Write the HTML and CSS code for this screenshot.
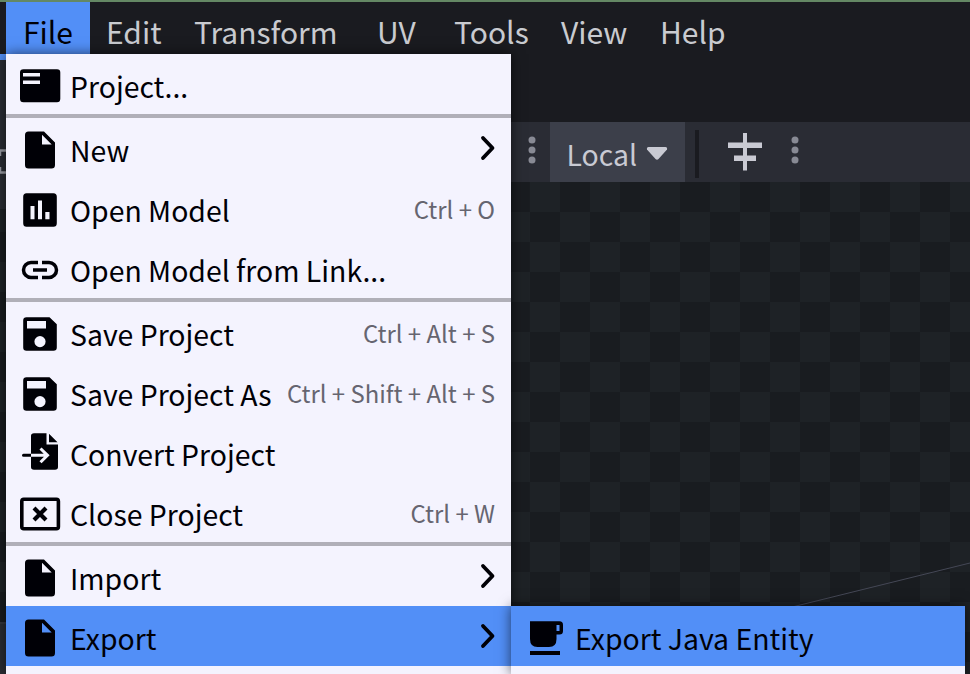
FILE: index.html
```
<!DOCTYPE html>
<html lang="en">
<head>
<meta charset="utf-8">
<title>Model editor</title>
<link rel="stylesheet" href="styles.css">
</head>
<body>
<svg class="defs" aria-hidden="true">
  <symbol id="doc" viewBox="0 0 40 40"><path fill-rule="evenodd" d="M8.500 1.500H24L35 12.500V35Q35 38.500 31.500 38.500H8.500Q5 38.500 5 35V5Q5 1.500 8.500 1.500ZM22 4.800V14.500H31.700Z"/></symbol>
  <symbol id="save" viewBox="0 0 40 40"><path fill-rule="evenodd" d="M6.500 3.300H29.500L36.800 10.300V33.500Q36.800 36.800 33.500 36.800H6.500Q3.200 36.800 3.200 33.500V6.500Q3.200 3.300 6.500 3.300ZM7 7V14.500H26V7ZM20 22A5.600 5.600 0 1 0 20 33.200A5.600 5.600 0 1 0 20 22Z"/></symbol>
  <symbol id="chev" viewBox="0 0 16 26"><path d="M3 3L12.500 13L3 23" fill="none" stroke="currentColor" stroke-width="3.800" stroke-linecap="round" stroke-linejoin="round"/></symbol>
</svg>
<div class="app">
  <nav class="menubar">
    <span class="tab file active">File</span><span class="tab edit">Edit</span><span class="tab transform">Transform</span><span class="tab uv">UV</span><span class="tab tools">Tools</span><span class="tab view">View</span><span class="tab help">Help</span>
  </nav>
  <div class="workspace">
    <aside class="side"><div class="accent"></div><div class="tools-left"><svg viewBox="0 0 7 28"><path d="M7 2.500H0V8M7 24.500H0V19" fill="none" stroke="#9a9ca4" stroke-width="2.500"/></svg></div><div class="texture"></div><div class="panel"></div></aside>
    <main class="main">
      <div class="head"></div>
      <div class="toolbar">
        <svg class="dots" viewBox="0 0 8 30"><circle cx="4" cy="5" r="3.500"/><circle cx="4" cy="15" r="3.500"/><circle cx="4" cy="25" r="3.500"/></svg>
        <div class="select"><span class="select-label">Local</span><svg viewBox="0 0 22 14"><path d="M2.500 0H19.500Q21.500 0 21 2.500L12.500 12Q11 13.500 9.500 12L1 2.500Q.5 0 2.500 0Z"/></svg></div>
        <div class="divider"></div>
        <svg class="pivot" viewBox="0 0 34 38"><path d="M15 0H19V9.500H34V15H19V22.500H28V28H19V37.500H15V28H6V22.500H15V15H0V9.500H15Z"/></svg>
        <svg class="dots" viewBox="0 0 8 30"><circle cx="4" cy="5" r="3.500"/><circle cx="4" cy="15" r="3.500"/><circle cx="4" cy="25" r="3.500"/></svg>
      </div>
      <div class="canvas"><svg class="axis" viewBox="0 0 180 45"><path d="M0 44.500L180 0" stroke="#454856" fill="none"/></svg></div>
    </main>
  </div>
</div>

<div class="menu">
  <div class="item"><svg class="icon" viewBox="0 0 40 40"><path fill-rule="evenodd" d="M3.500 3.300H37Q40.300 3.300 40.300 6.500V32.800Q40.300 36.300 37 36.300H3.500Q0 36.300 0 32.800V6.500Q0 3.300 3.500 3.300ZM3 7V10.500H20V7ZM3 14.500V18H20V14.500Z"/></svg><span class="label">Project...</span></div>
  <div class="sep"></div>
  <div class="item"><svg class="icon"><use href="#doc"/></svg><span class="label">New</span><svg class="chev"><use href="#chev"/></svg></div>
  <div class="item"><svg class="icon" viewBox="0 0 40 40"><path fill-rule="evenodd" d="M6.500 3.300H33.500Q36.800 3.300 36.800 6.800V33.300Q36.800 36.800 33.500 36.800H6.500Q3.200 36.800 3.200 33.300V6.800Q3.200 3.300 6.500 3.300ZM10.500 16V29.300H14.500V16ZM18 10.500V29.300H22V10.500ZM25.300 22V29.300H29.500V22Z"/></svg><span class="label">Open Model</span><span class="key">Ctrl + O</span></div>
  <div class="item"><svg class="icon" viewBox="0 0 40 40"><path d="M18 12.500H11A7.500 7.500 0 0 0 11 27.500H18M22 12.500H29A7.500 7.500 0 0 1 29 27.500H22M13 20H27" fill="none" stroke="currentColor" stroke-width="3.500"/></svg><span class="label">Open Model from Link...</span></div>
  <div class="sep"></div>
  <div class="item"><svg class="icon"><use href="#save"/></svg><span class="label">Save Project</span><span class="key">Ctrl + Alt + S</span></div>
  <div class="item"><svg class="icon"><use href="#save"/></svg><span class="label">Save Project As</span><span class="key">Ctrl + Shift + Alt + S</span></div>
  <div class="item"><svg class="icon" viewBox="0 0 40 40"><path d="M14 -.8H26.500V10.500H38V33Q38 35.800 35 35.800H14Q11 35.800 11 33V2Q11 -.8 14 -.8ZM29 -.2L37.500 8.300H29Z"/><path d="M3.500 21.300H12" stroke="currentColor" stroke-width="3" stroke-linecap="round"/><path d="M11 21.300H27M20.500 14.500L27.500 21.300L20.500 28.200" fill="none" stroke="#f4f3fe" stroke-width="3"/></svg><span class="label">Convert Project</span></div>
  <div class="item"><svg class="icon" viewBox="0 0 40 40"><rect x="1.800" y="5.200" width="36.600" height="29.500" rx="2" fill="none" stroke="currentColor" stroke-width="3.600"/><path d="M14 14L26 26M26 14L14 26" stroke="currentColor" stroke-width="4.200"/></svg><span class="label">Close Project</span><span class="key">Ctrl + W</span></div>
  <div class="sep"></div>
  <div class="item"><svg class="icon"><use href="#doc"/></svg><span class="label">Import</span><svg class="chev"><use href="#chev"/></svg></div>
  <div class="item selected"><svg class="icon"><use href="#doc"/></svg><span class="label">Export</span><svg class="chev"><use href="#chev"/></svg></div>
  <div class="item"></div>
</div>
<div class="menu submenu">
  <div class="item selected"><svg class="icon" viewBox="0 0 40 40"><path fill-rule="evenodd" d="M4 3.300H33.500Q37 3.300 37 7V13Q37 16.500 33.500 16.500H30.500V21Q30.500 29 23 29H11.500Q4 29 4 21ZM30.500 7V13H33.500V7ZM4 33H34V37H4Z"/></svg><span class="label">Export Java Entity</span></div>
  <div class="item"></div>
</div>
</body>
</html>
```
FILE: styles.css
```
* { box-sizing: border-box; }
body {
  margin: 0;
  width: 970px;
  height: 674px;
  overflow: hidden;
  background: #1a1b20;
  color: #000006;
  font-family: "Noto Sans CJK SC", "Noto Sans", sans-serif;
  font-size: 28.4px;
  line-height: 60px;
  white-space: nowrap;
}
svg { display: block; fill: currentColor; overflow: visible; flex: none; }
.defs { position: absolute; width: 0; height: 0; }
.app { display: flex; flex-direction: column; height: 674px; border-top: 2px solid #648864; }
.menubar { display: flex; flex: none; height: 52px; padding-left: 6px; color: #c9cbd0; font-size: 30px; line-height: 59px; }
.tab { flex: none; height: 52px; padding-left: 17px; }
.edit { padding-left: 16px; }
.tools { padding-left: 16px; }
.file { width: 84px; }
.edit { width: 87px; }
.transform { width: 183px; }
.uv { width: 78px; }
.tools { width: 106px; }
.view { width: 99px; }
.help { width: 100px; }
.active { background: #528ff7; color: #000006; }
.workspace { display: flex; flex: 1; }
.side { display: flex; flex-direction: column; width: 511px; }
.accent { height: 6px; background: #528ff7; }
.tools-left { height: 149px; padding-top: 88px; background: #2a2d34; }
.tools-left svg { width: 7px; height: 28px; }
.texture { height: 413px; background: repeating-linear-gradient(#1e2226 0 23px, #191c20 23px 53px, #1e2226 53px 60px); }
.panel { flex: 1; background: #2a2d34; border-top: 2px solid #33363d; }
.main { display: flex; flex-direction: column; flex: 1; }
.head { height: 68px; }
.toolbar { display: flex; height: 60px; padding-left: 17px; background: #2a2c34; color: #c9cad3; }
.dots { width: 8px; height: 30px; margin-top: 13px; color: #888a94; }
.select { display: flex; width: 135px; margin-left: 14px; padding-left: 16.500px; background: #3c3f4a; }
.select-label { width: 79.500px; line-height: 63px; }
.select svg { width: 22px; height: 14px; margin-top: 25px; }
.divider { width: 4px; height: 48px; margin: 8px 0 0 10px; background: #1a1b20; }
.pivot { width: 34px; height: 38px; margin: 11px 29px 0 28.500px; }
.canvas {
  display: flex;
  flex: 1;
  align-items: flex-start;
  padding: 381px 0 0 279px;
  background: conic-gradient(#191c20 0 25%, #1e2226 0 50%, #191c20 0 75%, #1e2226 0) 19px 0 / 60px 60px;
}
.axis { width: 180px; height: 45px; }
.menu {
  position: absolute;
  top: 54px;
  left: 6px;
  width: 505px;
  height: 620px;
  background: #f4f3fe;
  box-shadow: 0 0 12px rgba(0, 0, 0, .6);
}
.submenu { top: 606px; left: 511px; width: 454px; height: 68px; }
.item { display: flex; height: 60px; padding: 0 16px 0 14px; overflow: hidden; }
.menu > .item:last-child { height: 8px; }
.selected { background: #528ff7; }
.icon { width: 40px; height: 40px; margin-top: 12px; }
.label { margin-left: 10px; line-height: 63px; }
.key { margin-left: auto; color: #666570; font-size: 23.9px; line-height: 61px; }
.chev { width: 16px; height: 26px; margin: 17px -1px 0 auto; }
.sep { height: 4px; background: #b0afb8; }
.submenu .icon { margin-left: 1px; }
.submenu .label { margin-left: 9px; }
```
